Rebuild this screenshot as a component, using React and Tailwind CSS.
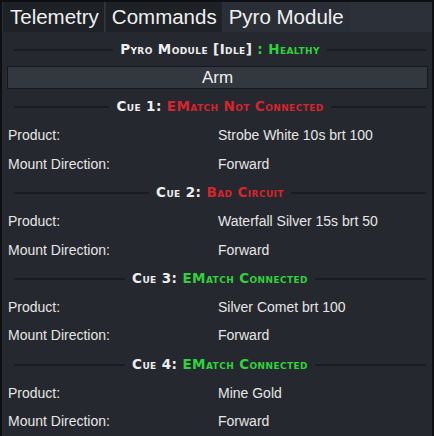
const cues = [
  { n: 1, status: 'EMatch Not Connected', ok: false, product: 'Strobe White 10s brt 100', dir: 'Forward' },
  { n: 2, status: 'Bad Circuit', ok: false, product: 'Waterfall Silver 15s brt 50', dir: 'Forward' },
  { n: 3, status: 'EMatch Connected', ok: true, product: 'Silver Comet brt 100', dir: 'Forward' },
  { n: 4, status: 'EMatch Connected', ok: true, product: 'Mine Gold', dir: 'Forward' },
]

function Separator({ children }) {
  return (
    <div className="flex items-center gap-[7px] h-[28.6px] pl-[12px] pr-[6px]">
      <div className="flex-1 h-[2px] bg-[#1a1c21]" />
      <div className="font-['DejaVu_Sans','Verdana',sans-serif] font-bold text-[13.5px] [font-variant:small-caps] text-[#eeeeee] tracking-[0.4px] whitespace-nowrap leading-none">
        {children}
      </div>
      <div className="flex-1 h-[2px] bg-[#1a1c21]" />
    </div>
  )
}

function Row({ label, value }) {
  return (
    <div className="grid grid-cols-[210px_1fr] items-center h-[28.6px] pl-[6px] text-[14px] text-[#e6e6e6]">
      <span>{label}</span>
      <span>{value}</span>
    </div>
  )
}

export default function App() {
  return (
    <div className="w-[434px] h-[436px] bg-[#0e0f12] pl-[2px] pt-[2px] pr-[2px] font-['Liberation_Sans',Arial,sans-serif] overflow-hidden">
      <div className="h-full bg-[#25282e] flex flex-col">
        <div className="flex h-[30px] bg-[#2c3038] text-[20.5px] text-[#f0f0f0] leading-none">
          <div className="flex items-center pl-[7px] pr-[5px] ml-[1px] bg-[#1e2126] border-r border-[#33363d]">Telemetry</div>
          <div className="flex items-center pl-[6px] pr-[5px] ml-[1px] bg-[#1e2126]">Commands</div>
          <div className="flex items-center pl-[6px] pr-[6px] ml-[1px] bg-[#2a2e36]">Pyro Module</div>
        </div>
        <div className="h-[4px]" />
        <Separator>
          Pyro Module [Idle] <span className="text-[#2ed33d]">: Healthy</span>
        </Separator>
        <div className="pl-[5px] pr-[4px] mt-[2px] mb-[3px]">
          <button className="w-full h-[23px] bg-[#33373f] border border-[#16181b] text-[17px] text-[#eeeeee] leading-none">
            Arm
          </button>
        </div>
        {cues.map(c => (
          <div key={c.n}>
            <Separator>
              Cue {c.n}: <span className={c.ok ? 'text-[#2ed33d]' : 'text-[#d8242d]'}>{c.status}</span>
            </Separator>
            <Row label="Product:" value={c.product} />
            <Row label="Mount Direction:" value={c.dir} />
          </div>
        ))}
      </div>
    </div>
  )
}
